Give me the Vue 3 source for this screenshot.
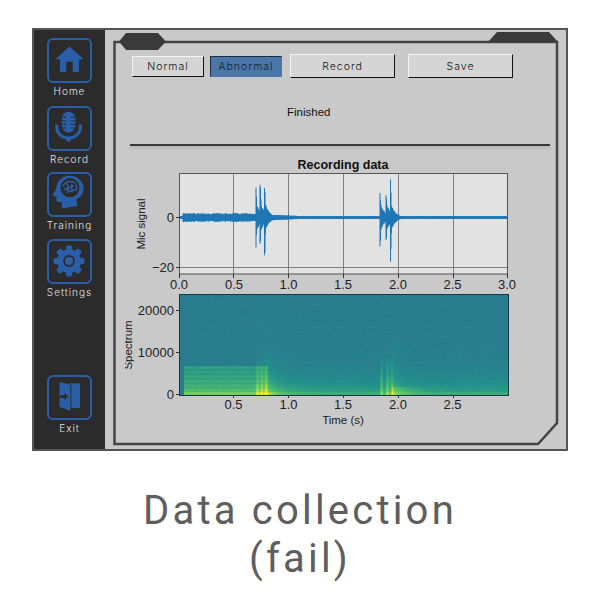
<template>
  <div class="page">
    <div class="window">
      <aside class="sidebar">
        <div class="nav-item">
          <div class="nav-icon">
            <svg viewBox="0 0 45 45" width="41" height="41">
              <path fill="#2a5ea8" d="M22.500 7 L7 21 H12 V35 H19 V24 H26 V35 H33 V21 H38 Z" />
            </svg>
          </div>
          <span class="nav-label">Home</span>
        </div>
        <div class="nav-item record">
          <div class="nav-icon">
            <svg viewBox="0 0 45 45" width="41" height="41">
              <rect x="14" y="4" width="15" height="23" rx="7.500" fill="#2a5ea8" />
              <path d="M13 10h6M13 14h6M13 18h6M13 22h6M24 10h6M24 14h6M24 18h6M24 22h6" stroke="#2b2b2b" stroke-width="1" />
              <path d="M8.500 18v3a13 12 0 0 0 26 0v-3" fill="none" stroke="#2a5ea8" stroke-width="3.400" />
              <path d="M21.500 32v5" stroke="#2a5ea8" stroke-width="4" />
            </svg>
          </div>
          <span class="nav-label">Record</span>
        </div>
        <div class="nav-item">
          <div class="nav-icon">
            <svg viewBox="0 0 45 45" width="41" height="41">
              <path fill="#2a5ea8" d="M23 2C14 2 8 9 8 16L4 24 8 25V30L14 31 14 38 31 35 30 28C35 25 38 21 38 16 38 8 31 2 23 2Z" />
              <circle cx="23" cy="15" r="10.500" fill="#2b2b2b" />
              <path d="M15 14C17 9 22 7 27 9 30 11 31 15 30 18M17 18C20 14 24 15 27 13M19 10 22 15 20 21M25 11 25 20M17 15 24 19 30 17" fill="none" stroke="#2a5ea8" stroke-width="1.700" />
            </svg>
          </div>
          <span class="nav-label">Training</span>
        </div>
        <div class="nav-item">
          <div class="nav-icon">
            <svg viewBox="0 0 45 45" width="41" height="41">
              <rect
                v-for="angle in gearTeeth"
                :key="angle"
                x="18.500"
                y="5"
                width="7"
                height="34"
                rx="2"
                fill="#2a5ea8"
                :transform="`rotate(${angle} 22 22)`"
              />
              <circle cx="22" cy="22" r="13" fill="#2a5ea8" />
              <circle cx="22" cy="22" r="5.500" fill="#2f5f9f" stroke="#2b2b2b" stroke-width="2" />
            </svg>
          </div>
          <span class="nav-label">Settings</span>
        </div>
        <div class="nav-item exit">
          <div class="nav-icon">
            <svg viewBox="0 0 45 45" width="41" height="41">
              <rect x="16" y="7" width="18" height="27" fill="#2a5ea8" />
              <path d="M11 5 L24 8 V38 L11 33 Z" fill="#2a5ea8" stroke="#2b2b2b" stroke-width="1" />
              <path d="M12 20H17V17.500L21 21.500 17 25.500V23H12Z" fill="#2b2b2b" />
            </svg>
          </div>
          <span class="nav-label">Exit</span>
        </div>
      </aside>

      <main class="content">
        <svg class="frame" viewBox="105 30 461 419" width="461" height="419">
          <path d="M114.500 42 H557 V423 L538 444 H114.500 Z" fill="none" stroke="#444" stroke-width="2.500" />
          <polygon points="119,41.500 126,33 158,33 166,41.500 158,50 126,50" fill="#3a3a3a" />
          <polygon points="488,42 497,32 549,32 558,42" fill="#3a3a3a" />
        </svg>

        <div class="toolbar">
          <div class="mode-buttons">
            <button class="btn mode">Normal</button>
            <button class="btn mode active">Abnormal</button>
          </div>
          <div class="action-buttons">
            <button class="btn action">Record</button>
            <button class="btn action">Save</button>
          </div>
        </div>

        <p class="status">Finished</p>
        <div class="divider"></div>

        <div class="chart">
          <svg viewBox="125 155 425 277" width="425" height="277">
            <text x="343" y="169" class="title" text-anchor="middle">Recording data</text>

            <rect x="179.500" y="173.500" width="328" height="100.500" fill="#e2e2e2" />
            <path
              v-for="x in gridX"
              :key="x"
              :d="`M${x} 173.500V274`"
              stroke="#808080"
              stroke-width="1"
            />
            <path d="M179.500 217.500H507.500M179.500 267.500H507.500" stroke="#808080" stroke-width="1" />
            <path :d="wavePath" stroke="#1f77b4" stroke-width="1" fill="none" />
            <rect x="179.500" y="173.500" width="328" height="100.500" fill="none" stroke="#555" stroke-width="1" />

            <g stroke="#333" stroke-width="1">
              <path v-for="x in [179.5, ...gridX, 507.5]" :key="x" :d="`M${x} 274V278`" />
              <path d="M176 217.500H179.500M176 267.500H179.500" />
              <path v-for="x in gridX.slice(0, 5)" :key="'s' + x" :d="`M${x} 394.500V398`" />
              <path d="M176 310.500H179.500M176 352.500H179.500M176 394.500H179.500" />
            </g>

            <g class="tick">
              <text v-for="(x, i) in [179, 234, 288.500, 343, 398, 452.500, 507]" :key="x" :x="x" y="289" text-anchor="middle">{{ (i * 0.5).toFixed(1) }}</text>
              <text x="174" y="222" text-anchor="end">0</text>
              <text x="174" y="272" text-anchor="end">−20</text>
              <text x="174" y="315" text-anchor="end">20000</text>
              <text x="174" y="357" text-anchor="end">10000</text>
              <text x="174" y="399" text-anchor="end">0</text>
              <text v-for="(x, i) in [233.500, 288.500, 343, 398, 452.500]" :key="'l' + x" :x="x" y="409" text-anchor="middle">{{ ((i + 1) * 0.5).toFixed(1) }}</text>
            </g>

            <g class="axis-label">
              <text transform="translate(145 224) rotate(-90)" text-anchor="middle">Mic signal</text>
              <text transform="translate(132 345) rotate(-90)" text-anchor="middle">Spectrum</text>
              <text x="343" y="424" text-anchor="middle">Time (s)</text>
            </g>
          </svg>
          <canvas ref="specCanvas" class="spectrogram" width="328" height="100"></canvas>
        </div>
      </main>
    </div>

    <h1 class="caption">Data collection<br />(fail)</h1>
  </div>
</template>

<script setup>
import { onMounted, ref } from "vue";

const gearTeeth = [0, 45, 90, 135];
const gridX = [233.5, 288.5, 343.5, 398.5, 453.5];
const specCanvas = ref(null);

// small seeded random so the noise stays the same on every load
let seed = 12345;
function rnd() {
  seed = (seed * 1664525 + 1013904223) % 4294967296;
  return seed / 4294967296;
}

const bursts = [
  { t: 0.695, up: 13.5, down: 12.5 },
  { t: 0.735, up: 14, down: 11 },
  { t: 0.775, up: 12, down: 17 },
  { t: 1.83, up: 10, down: 12 },
  { t: 1.885, up: 10, down: 10 },
  { t: 1.925, up: 16, down: 20.5 },
];

function buildWave() {
  let d = "";
  for (let px = 0; px <= 656; px++) {
    const t = px / 2 / 109.4;
    let band = 0.6;
    if (t > 0.03 && t < 0.65) band = 1.3 + rnd() * 0.6;
    else if (t >= 0.65 && t < 1.2) band = Math.max(0.6, 1.5 - (t - 0.65) * 2);
    let up = band;
    let down = band;
    for (const b of bursts) {
      const dt = t - b.t;
      if (dt < 0) continue;
      // sharp first peak, then a wider body that rings down
      const spike = dt < 0.006 ? 1 : Math.exp(-(dt - 0.006) / 0.006);
      const body = Math.exp(-dt / 0.04) * 7;
      up = Math.max(up, b.up * spike, body);
      down = Math.max(down, b.down * spike, body);
    }
    const x = 179.5 + px / 2;
    const y1 = 217.5 - up * (0.85 + rnd() * 0.15) * 2.5;
    const y2 = 217.5 + down * (0.85 + rnd() * 0.15) * 2.5;
    d += `M${x} ${y1.toFixed(1)}V${y2.toFixed(1)}`;
  }
  return d;
}
const wavePath = buildWave();

const viridis = [
  [68, 1, 84],
  [59, 82, 139],
  [33, 145, 140],
  [94, 201, 98],
  [253, 231, 37],
];

function colorAt(v) {
  const c = Math.min(0.999, Math.max(0, v)) * 4;
  const i = Math.floor(c);
  const f = c - i;
  return viridis[i].map((a, k) => a + (viridis[i + 1][k] - a) * f);
}

function specValue(t, hz) {
  let v = 0.42 + (rnd() - 0.5) * 0.035;
  if (t < 0.8) {
    if (hz < 7000 && t > 0.03) {
      v += 0.1 + 0.24 * Math.exp(-hz / 3000) + 0.025 * Math.sin(hz / 170);
      if (hz < 900 && hz > 350) v += 0.08;
    }
  } else {
    const strength = 0.55 + 0.45 * Math.exp(-(t - 0.8) / 0.2);
    v += strength * (0.34 * Math.exp(-hz / 3000) + 0.01 * Math.sin(hz / 170));
    if (hz < 900 && hz > 350) v += 0.08 * strength;
  }
  for (const b of bursts) {
    const dt = t - b.t - 0.006;
    if (dt < -0.02) continue;
    const fall = Math.exp(-hz / 5000) * (hz < 8600 ? 1 : 0);
    v += 0.22 * Math.exp(-((dt / 0.012) ** 2)) * fall;
    if (dt > 0) v += 0.1 * Math.exp(-dt / 0.07) * Math.exp(-hz / 5000);
  }
  if (t > 1.93 && t < 2.3 && hz < 2000) v += 0.12 * (1 - (t - 1.93) / 0.37);
  return v;
}

function drawSpectrogram() {
  const ctx = specCanvas.value.getContext("2d");
  const img = ctx.createImageData(328, 100);
  for (let y = 0; y < 100; y++) {
    for (let x = 0; x < 328; x++) {
      const [r, g, b] = colorAt(specValue(x / 109.4, (100 - y) * 239));
      const p = (y * 328 + x) * 4;
      img.data[p] = r;
      img.data[p + 1] = g;
      img.data[p + 2] = b;
      img.data[p + 3] = 255;
    }
  }
  ctx.putImageData(img, 0, 0);
}

onMounted(drawSpectrogram);
</script>

<style scoped>
.page {
  padding: 28px 0 0 32px;
}

.window {
  display: flex;
  width: 532px;
  height: 419px;
  border: 2px solid #555;
  background: #c9c9c9;
}

.sidebar {
  display: flex;
  flex-direction: column;
  align-items: center;
  width: 71px;
  padding-top: 8px;
  padding-bottom: 15px;
  box-sizing: border-box;
  background: #2b2b2b;
}

.nav-item {
  display: flex;
  flex-direction: column;
  align-items: center;
  height: 67px;
}

.nav-item.record {
  margin-top: 1px;
  height: 66px;
}

.nav-item.exit {
  margin-top: auto;
  height: auto;
}

.nav-icon {
  display: flex;
  align-items: center;
  justify-content: center;
  width: 41px;
  height: 41px;
  border: 2px solid #2a5ea8;
  border-radius: 6px;
}

.nav-label {
  margin-top: 2px;
  font-family: Inter, sans-serif;
  font-size: 10px;
  font-weight: 300;
  line-height: 12px;
  letter-spacing: 1px;
  color: #e4e4e4;
}

.content {
  position: relative;
  flex: 1;
  padding: 24px 0 0 25px;
  box-sizing: border-box;
}

.frame {
  position: absolute;
  left: 0;
  top: 0;
}

.toolbar {
  position: relative;
  display: flex;
  align-items: center;
  margin-left: 2px;
  gap: 8px;
}

.mode-buttons {
  display: flex;
  gap: 6px;
}

.action-buttons {
  display: flex;
  gap: 13px;
}

.btn {
  padding: 0;
  box-sizing: border-box;
  border: 1px solid #f4f4f4;
  border-right-color: #111;
  border-bottom-color: #111;
  background: #d5d5d5;
  font-family: Inter, sans-serif;
  font-size: 10.500px;
  font-weight: 300;
  letter-spacing: 1px;
  color: #111;
}

.btn.mode {
  width: 72px;
  height: 21px;
}

.btn.mode.active {
  border-color: #1c2c44;
  border-right-color: #4a76a8;
  border-bottom-color: #4a76a8;
  background: #4a76a8;
  color: #14202f;
}

.btn.action {
  width: 105px;
  height: 24px;
}

.status {
  position: relative;
  margin: 0;
  padding: 27px 0 0 157px;
  font-family: "Liberation Sans", sans-serif;
  font-size: 11.500px;
  line-height: 14px;
  color: #111;
}

.divider {
  position: relative;
  width: 420px;
  height: 2px;
  margin-top: 25px;
  background: #3a3a3a;
  box-shadow: 0 2px 3px rgba(0, 0, 0, 0.15);
}

.chart {
  position: relative;
  margin: 9px 0 0 -5px;
  width: 425px;
  height: 277px;
}

.chart svg {
  display: block;
}

.title {
  font-family: "Liberation Sans", sans-serif;
  font-size: 12.500px;
  font-weight: 700;
  fill: #111;
}

.tick text {
  font-family: "Liberation Sans", sans-serif;
  font-size: 13px;
  fill: #222;
}

.axis-label text {
  font-family: "Liberation Sans", sans-serif;
  font-size: 11.500px;
  fill: #222;
}

.spectrogram {
  position: absolute;
  left: 54.500px;
  top: 139.500px;
  width: 328px;
  height: 100px;
  outline: 1px solid #123a4a;
}

.caption {
  margin: 36px 0 0 -32px;
  width: 600px;
  font-family: Roboto, sans-serif;
  font-size: 40px;
  font-weight: 400;
  line-height: 48px;
  letter-spacing: 3.200px;
  text-align: center;
  color: #5e5e5e;
}
</style>

<style>
html,
body {
  background: #fff;
}
</style>
